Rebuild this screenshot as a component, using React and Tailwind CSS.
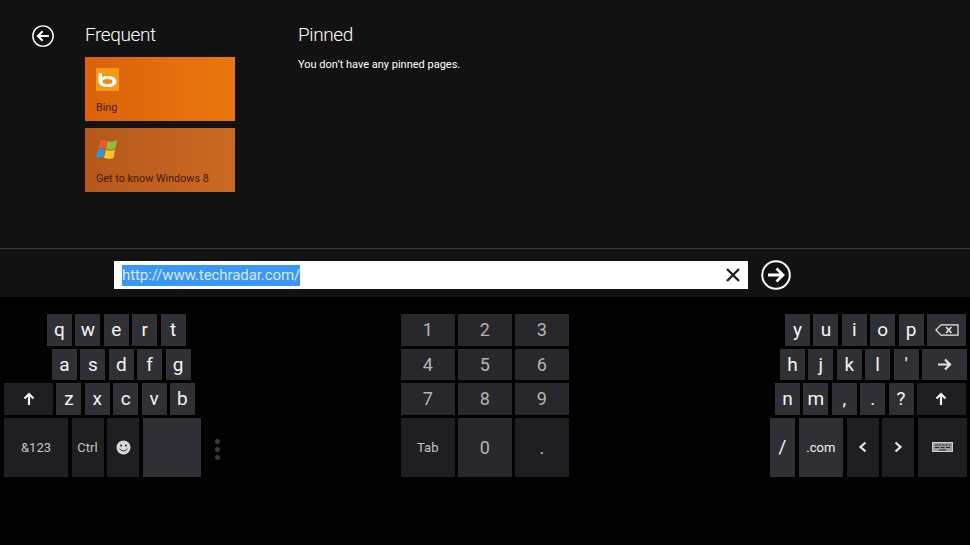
const LIGHT = 'bg-[#302f36] text-[#f4f4f4]';
const MID = 'bg-[#28272c] text-[#b4b4b4]';
const DARK = 'bg-[#1f1e22] text-[#c4c4c4]';

const font = { fontFamily: 'Roboto, "Open Sans", sans-serif' };

const Key = ({ w, tone = LIGHT, tall, className = '', children }) => (
  <div
    className={`flex shrink-0 items-center justify-center ${tall ? 'h-[59.5px]' : 'h-[31.5px]'} ${w} ${tone} ${className}`}
  >
    {children}
  </div>
);

const Row = ({ className = '', children }) => <div className={`flex ${className}`}>{children}</div>;

const Letters = ({ keys }) =>
  keys.map((k) => (
    <Key key={k} w="w-[25px]" className="text-[19px] leading-none">
      {k}
    </Key>
  ));

const UpArrow = () => (
  <svg width="14" height="14" viewBox="0 0 14 14" fill="none" stroke="#f4f4f4" strokeWidth="2.2">
    <path d="M7 13V2M2.5 6.5 7 2l4.5 4.5" />
  </svg>
);

const RightArrow = () => (
  <svg width="15" height="13" viewBox="0 0 15 13" fill="none" stroke="#e4e4e4" strokeWidth="2.2">
    <path d="M1 6.500h12M8 1.500l5 5-5 5" />
  </svg>
);

const Backspace = () => (
  <svg width="24" height="12" viewBox="0 0 24 12" fill="none" stroke="#e8e8e8" strokeWidth="1.2">
    <path d="M6 .8h17v10.400H6L.9 6z" />
    <path d="M11 3l5.500 6M16.500 3 11 9" strokeWidth="1.600" />
  </svg>
);

const Smiley = () => (
  <svg width="15" height="15" viewBox="0 0 15 15">
    <circle cx="7.500" cy="7.500" r="7" fill="#d8d8d8" />
    <circle cx="5" cy="5.600" r="1" fill="#1f1e22" />
    <circle cx="10" cy="5.600" r="1" fill="#1f1e22" />
    <path d="M3.800 8.600c1 3 6.400 3 7.400 0" fill="none" stroke="#1f1e22" strokeWidth="1" />
  </svg>
);

const KeyboardIcon = () => (
  <svg width="21" height="10" viewBox="0 0 21 10" fill="#9a9a9a" stroke="#d0d0d0" strokeWidth="1">
    <rect x=".5" y=".5" width="20" height="9" />
    <path
      d="M3 3h2.500M6.500 3H9M10 3h2.500M13.500 3H16M17 3h1.500M3 5.500h4M8.500 5.500h4M14 5.500h4M7 8h7"
      stroke="#26252a"
      strokeWidth="1"
    />
  </svg>
);

const CircleArrow = ({ flip, size }) => (
  <svg width={size} height={size} viewBox="0 0 30 30" fill="none" stroke="#fff" className={flip ? '-scale-x-100' : ''}>
    <circle cx="15" cy="15" r="13.800" strokeWidth="2" />
    <path d="M7 15h14.500M15.500 8.500 22 15l-6.500 6.500" strokeWidth="2.800" />
  </svg>
);

const BingLogo = () => (
  <svg width="23" height="23" viewBox="0 0 23 23">
    <rect width="23" height="23" fill="#f59a12" />
    <path d="M2.500 5v8.500c0 3 3.500 5.500 9 5.500s9-2.200 9-5.500-4-5.500-9-5.500c-2 0-4 .4-5.500 1.200V5z" fill="#fff" />
    <ellipse cx="11.500" cy="13.400" rx="5" ry="2.500" fill="#f0890f" />
  </svg>
);

const WindowsLogo = () => (
  <svg width="22" height="21" viewBox="0 0 22 21" className="blur-[0.4px]">
    <path d="M4.200 1.500c2-1 4-.9 6.300.2L9 9.500C6.800 8.400 4.500 8.400 2.300 9.600z" fill="#ef5a2a" />
    <path d="M11.500 2c2.400 1 4.800 1 7.300-.2L21 1.500 19.300 9.800c-2.600 1.200-5.200 1.200-9.300 0z" fill="#8cc03c" />
    <path d="M2 10.600c2.200-1.100 4.500-1.100 6.800 0L7.200 19c-2.200-1.200-4.600-1.200-6.900.2z" fill="#2f95e0" />
    <path d="M9.800 10.800c3.200 1.200 6.200 1.200 9.300.1l-1.700 8c-3 1.300-6.200 1.200-9.300-.1z" fill="#f8c92f" />
  </svg>
);

const Tile = ({ className, icon, label }) => (
  <div className={`flex h-[64px] w-[149.5px] flex-col pl-[11px] pt-[11px] ${className}`}>
    <div className="h-[23px]">{icon}</div>
    <div className="mt-[8px] text-[10.800px] leading-[18px] text-[#4a1a08]">{label}</div>
  </div>
);

export default function App() {
  return (
    <div className="flex h-[545px] w-[970px] flex-col overflow-hidden bg-black" style={font}>
      {/* history panel */}
      <div className="flex h-[248px] bg-[#121212] pl-[32px] pt-[25px]">
        <div className="w-[53px]">
          <CircleArrow flip size={22} />
        </div>
        <div className="w-[213px]">
          <div className="-mt-[2px] text-[19px] font-light leading-[24px] tracking-[-0.4px] text-white">Frequent</div>
          <div className="mt-[10px] flex flex-col gap-[7px]">
            <Tile className="bg-gradient-to-r from-[#dc620a] to-[#ea770e]" icon={<BingLogo />} label="Bing" />
            <Tile
              className="bg-gradient-to-r from-[#b5581c] to-[#cc6a22]"
              icon={<WindowsLogo />}
              label="Get to know Windows 8"
            />
          </div>
        </div>
        <div>
          <div className="-mt-[2px] text-[19px] font-light leading-[24px] tracking-[-0.4px] text-white">Pinned</div>
          <div className="mt-[10px] text-[11px] leading-[16px] text-white">You don’t have any pinned pages.</div>
        </div>
      </div>

      {/* address bar */}
      <div className="flex h-[49px] items-center border-t border-[#3a3a3a] bg-[#121212] pl-[114px] pt-[4px]">
        <div className="flex h-[28px] w-[634px] items-center justify-between bg-white pl-[8px] pr-[8px]">
          <span className="bg-[#3a97f5] text-[15px] leading-[21px] tracking-[-0.08px] text-[#d8eaff]">
            http://www.techradar.com/
          </span>
          <svg width="14" height="14" viewBox="0 0 14 14" stroke="#222" strokeWidth="2.400">
            <path d="M1 1l12 12M13 1 1 13" />
          </svg>
        </div>
        <div className="ml-[13px]">
          <CircleArrow size={30} />
        </div>
      </div>

      {/* split keyboard */}
      <div className="flex flex-1 pl-[4px] pr-[3px] pt-[17px]">
        <div className="relative flex w-[201px] flex-col gap-[3px]">
          <Row className="gap-[3.400px] pl-[43px]">
            <Letters keys={['q', 'w', 'e', 'r', 't']} />
          </Row>
          <Row className="gap-[3.400px] pl-[48px]">
            <Letters keys={['a', 's', 'd', 'f', 'g']} />
          </Row>
          <Row className="gap-[3.400px]">
            <Key w="w-[49px]" tone={DARK}>
              <UpArrow />
            </Key>
            <Letters keys={['z', 'x', 'c', 'v', 'b']} />
          </Row>
          <Row className="gap-[3.500px]">
            <Key tall w="w-[64px]" tone={DARK} className="text-[13px]">
              &amp;123
            </Key>
            <Key tall w="w-[32px]" tone={DARK} className="text-[13px]">
              Ctrl
            </Key>
            <Key tall w="w-[32px]" tone={DARK}>
              <Smiley />
            </Key>
            <Key tall w="w-[58px]" />
          </Row>
          <div className="absolute left-[211px] top-[125px] flex flex-col gap-[3.500px]">
            <div className="h-[4.500px] w-[4.500px] rounded-full bg-[#3a3a3a]" />
            <div className="h-[4.500px] w-[4.500px] rounded-full bg-[#3a3a3a]" />
            <div className="h-[4.500px] w-[4.500px] rounded-full bg-[#3a3a3a]" />
          </div>
        </div>

        <div className="ml-[196px] grid grid-cols-[53.500px_53.500px_53.500px] gap-x-[3.500px] gap-y-[3px] self-start">
          {['1', '2', '3', '4', '5', '6', '7', '8', '9'].map((n) => (
            <Key key={n} w="w-full" tone={MID} className="text-[18px]">
              {n}
            </Key>
          ))}
          <Key tall w="w-full" tone={DARK} className="text-[13px]">
            Tab
          </Key>
          <Key tall w="w-full" tone={MID} className="text-[18px]">
            0
          </Key>
          <Key tall w="w-full" tone={DARK} className="text-[18px]">
            .
          </Key>
        </div>

        <div className="ml-auto flex w-[197px] flex-col gap-[3px]">
          <Row className="gap-[3.400px] pl-[15px]">
            <Letters keys={['y', 'u', 'i', 'o', 'p']} />
            <Key w="w-[39.500px]">
              <Backspace />
            </Key>
          </Row>
          <Row className="gap-[3.400px] pl-[10px]">
            <Letters keys={['h', 'j', 'k', 'l', "'"]} />
            <Key w="w-[45px]">
              <RightArrow />
            </Key>
          </Row>
          <Row className="gap-[3.400px] pl-[5px]">
            <Letters keys={['n', 'm', ',', '.', '?']} />
            <Key w="w-[49px]" tone={DARK}>
              <UpArrow />
            </Key>
          </Row>
          <Row className="gap-[3.800px]">
            <Key tall w="w-[25px]" className="text-[19px]">
              /
            </Key>
            <Key tall w="w-[44px]" className="text-[13px]">
              .com
            </Key>
            <Key tall w="w-[32px]" tone={DARK}>
              <svg width="9" height="12" viewBox="0 0 9 12" fill="none" stroke="#e8e8e8" strokeWidth="2.200">
                <path d="M7.500 1.500 2.500 6l5 4.500" />
              </svg>
            </Key>
            <Key tall w="w-[32px]" tone={DARK}>
              <svg width="9" height="12" viewBox="0 0 9 12" fill="none" stroke="#e8e8e8" strokeWidth="2.200">
                <path d="M1.500 1.500 6.500 6l-5 4.500" />
              </svg>
            </Key>
            <Key tall w="w-[49px]" tone={DARK}>
              <KeyboardIcon />
            </Key>
          </Row>
        </div>
      </div>
    </div>
  );
}
